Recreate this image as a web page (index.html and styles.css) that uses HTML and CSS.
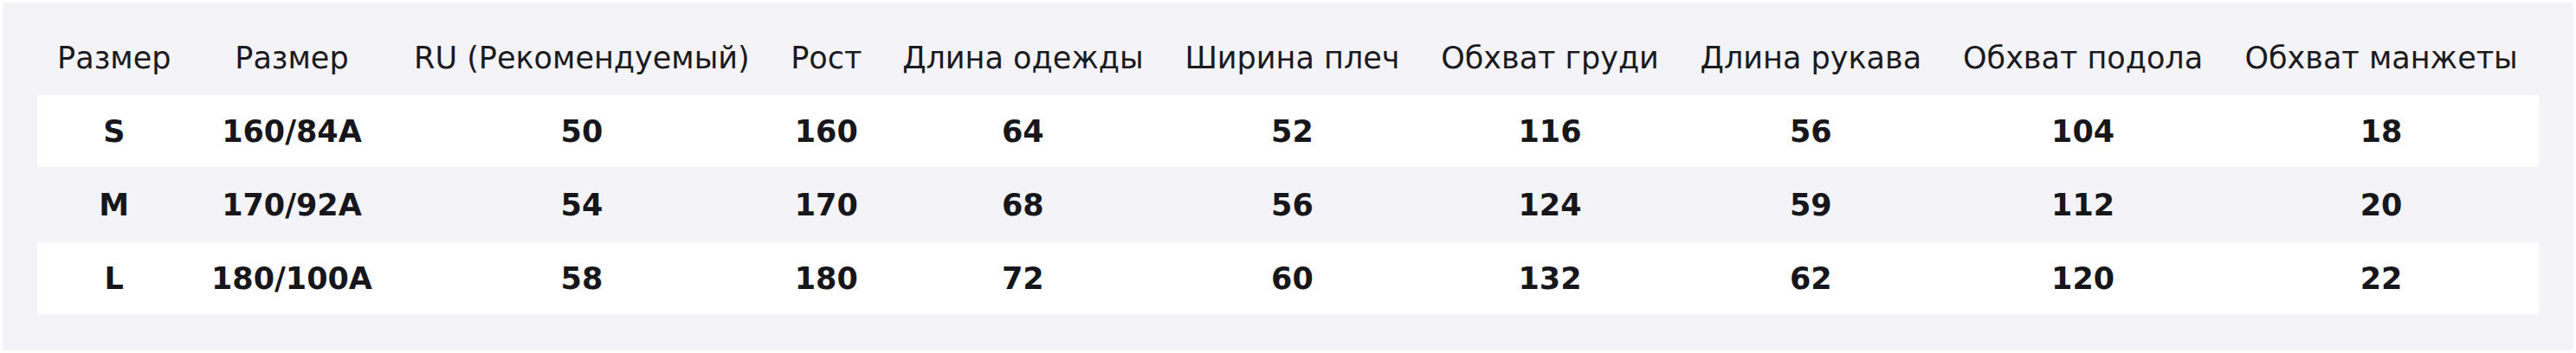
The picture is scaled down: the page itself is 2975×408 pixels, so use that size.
FILE: index.html
```html
<!DOCTYPE html>
<html lang="ru">
<head>
<meta charset="utf-8">
<title>Таблица размеров</title>
<link rel="stylesheet" href="styles.css">
</head>
<body>
<div class="size-chart">
  <table class="size-table">
    <thead>
      <tr>
        <th>Размер</th>
        <th>Размер</th>
        <th>RU (Рекомендуемый)</th>
        <th>Рост</th>
        <th>Длина одежды</th>
        <th>Ширина плеч</th>
        <th>Обхват груди</th>
        <th>Длина рукава</th>
        <th>Обхват подола</th>
        <th>Обхват манжеты</th>
      </tr>
    </thead>
    <tbody>
      <tr class="row-light">
        <td>S</td><td>160/84A</td><td>50</td><td>160</td><td>64</td><td>52</td><td>116</td><td>56</td><td>104</td><td>18</td>
      </tr>
      <tr class="row-shade">
        <td>M</td><td>170/92A</td><td>54</td><td>170</td><td>68</td><td>56</td><td>124</td><td>59</td><td>112</td><td>20</td>
      </tr>
      <tr class="row-light">
        <td>L</td><td>180/100A</td><td>58</td><td>180</td><td>72</td><td>60</td><td>132</td><td>62</td><td>120</td><td>22</td>
      </tr>
    </tbody>
  </table>
</div>
</body>
</html>
```

FILE: styles.css
```css
html, body {
  background: #ffffff;
}
body {
  margin: 3px;
  font-family: "DejaVu Sans", "Noto Sans", sans-serif;
}
.size-chart {
  background: #f3f3f8;
  padding: 20px 40px 40px;
}
.size-table {
  width: 100%;
  border-collapse: separate;
  border-spacing: 0 2px;
  font-size: 35px;
  color: #16161b;
}
.size-table th,
.size-table td {
  height: 83px;
  padding: 0 22px;
  text-align: center;
  vertical-align: middle;
  white-space: nowrap;
  box-sizing: border-box;
}
.size-table th {
  font-weight: 400;
  color: #1a1a20;
}
.size-table td {
  font-weight: 700;
}
.row-light td {
  background: #ffffff;
}
.row-shade td {
  background: transparent;
}
```
